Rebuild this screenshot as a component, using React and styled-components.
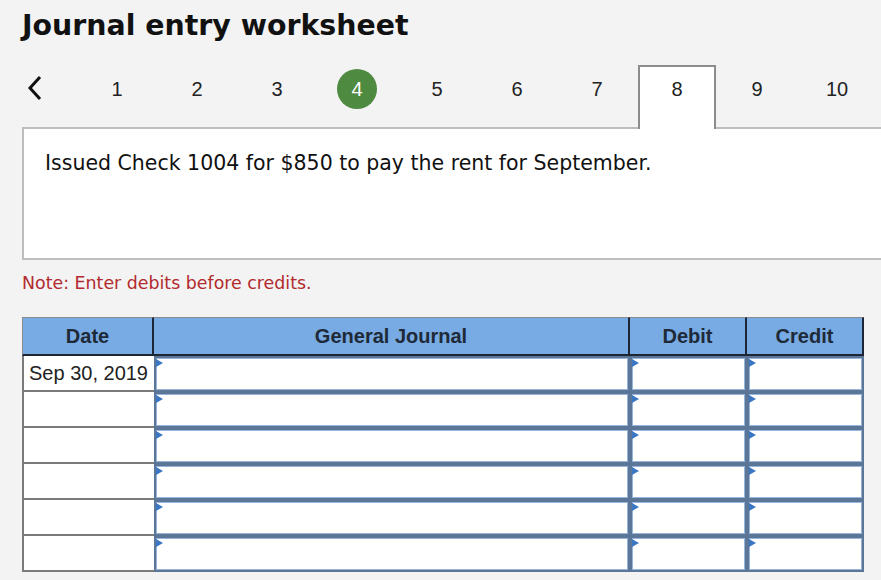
import React from "react";
import styled, { createGlobalStyle } from "styled-components";

const GlobalStyle = createGlobalStyle`
  html, body {
    margin: 0;
    padding: 0;
    background: #f3f3f3;
    overflow: hidden;
  }
  body {
    font-family: "DejaVu Sans", Verdana, sans-serif;
    color: #1a1a1a;
  }
`;

const Page = styled.div`
  width: 881px;
  height: 580px;
  padding-left: 22px;
  box-sizing: border-box;
  overflow: hidden;
`;

const Title = styled.h1`
  margin: 10px 0 0;
  font-size: 28.4px;
  line-height: 32px;
  font-weight: bold;
  color: #111;
`;

const TabRow = styled.div`
  display: flex;
  align-items: flex-start;
  gap: 2px;
  height: 62px;
  margin-top: 23px;
  position: relative;
  z-index: 1;
`;

const PrevButton = styled.button`
  width: 54px;
  height: 62px;
  padding: 4px 0 0 4px;
  border: 0;
  background: none;
  display: flex;
  align-items: flex-start;
  cursor: pointer;
  svg {
    margin-top: 5px;
  }
`;

const Tab = styled.div`
  width: 78px;
  height: ${(p) => (p.$active ? "64px" : "62px")};
  box-sizing: border-box;
  display: flex;
  justify-content: center;
  align-items: flex-start;
  padding-top: ${(p) => (p.$active ? "2px" : "4px")};
  background: ${(p) => (p.$active ? "#fff" : "transparent")};
  border: ${(p) => (p.$active ? "2px solid #8c8c8c" : "0")};
  border-bottom: 0;
  font-family: "Liberation Sans", Arial, sans-serif;
  font-size: 20px;
  color: #222;
`;

const TabNumber = styled.span`
  width: 40px;
  height: 40px;
  line-height: 40px;
  text-align: center;
  border-radius: 50%;
  background: ${(p) => (p.$done ? "#4e8a40" : "transparent")};
  color: ${(p) => (p.$done ? "#fff" : "#222")};
`;

const QuestionBox = styled.div`
  width: 880px;
  height: 133px;
  box-sizing: border-box;
  background: #fff;
  border: 2px solid #bdbdbd;
  padding: 22px 21px;
  font-size: 20.5px;
  line-height: 24px;
  color: #111;
`;

const Note = styled.p`
  margin: 12px 0 0;
  font-size: 17.4px;
  line-height: 22px;
  color: #b22a2e;
`;

const Table = styled.div`
  margin-top: 23px;
  width: 842px;
  display: grid;
  grid-template-columns: 132px 476px 117px 117px;
`;

const HeadCell = styled.div`
  height: 39px;
  box-sizing: border-box;
  background: #78abe3;
  border-top: 1px solid #8a8a8a;
  border-left: ${(p) => (p.$first ? "1px solid #8a8a8a" : "0")};
  border-right: 2px solid #1d2633;
  border-bottom: 2px solid #1d2633;
  display: flex;
  align-items: center;
  justify-content: center;
  font-family: "Liberation Sans", Arial, sans-serif;
  font-weight: bold;
  font-size: 20px;
  color: #1e2a38;
`;

const DateCell = styled.div`
  height: 36px;
  box-sizing: border-box;
  background: #fff;
  border-left: 2px solid #7a7a7a;
  border-bottom: 2px solid #7a7a7a;
  padding-left: 5px;
  display: flex;
  align-items: center;
  font-family: "Liberation Sans", Arial, sans-serif;
  font-size: 20px;
  color: #222;
`;

const InputCell = styled.div`
  position: relative;
  height: 36px;
  box-sizing: border-box;
  background: #fff;
  border: 2px solid #5c7697;
  box-shadow: inset 0 0 0 1px #98b6dc;
  &::before {
    content: "";
    position: absolute;
    left: 0;
    top: 1px;
    border-top: 4px solid transparent;
    border-bottom: 4px solid transparent;
    border-left: 7px solid #3b77c3;
  }
`;

const steps = [1, 2, 3, 4, 5, 6, 7, 8, 9, 10];
const rows = ["Sep 30, 2019", "", "", "", "", ""];

export default function App() {
  return (
    <Page>
      <GlobalStyle />
      <Title>Journal entry worksheet</Title>
      <TabRow>
        <PrevButton aria-label="Previous">
          <svg width="20" height="28" viewBox="0 0 20 28">
            <polyline
              points="14,3 4,14 14,25"
              fill="none"
              stroke="#111"
              strokeWidth="3"
            />
          </svg>
        </PrevButton>
        {steps.map((n) => (
          <Tab key={n} $active={n === 8}>
            <TabNumber $done={n === 4}>{n}</TabNumber>
          </Tab>
        ))}
      </TabRow>
      <QuestionBox>
        Issued Check 1004 for $850 to pay the rent for September.
      </QuestionBox>
      <Note>Note: Enter debits before credits.</Note>
      <Table>
        <HeadCell $first>Date</HeadCell>
        <HeadCell>General Journal</HeadCell>
        <HeadCell>Debit</HeadCell>
        <HeadCell>Credit</HeadCell>
        {rows.map((d, i) => (
          <React.Fragment key={i}>
            <DateCell>{d}</DateCell>
            <InputCell />
            <InputCell />
            <InputCell />
          </React.Fragment>
        ))}
      </Table>
    </Page>
  );
}
